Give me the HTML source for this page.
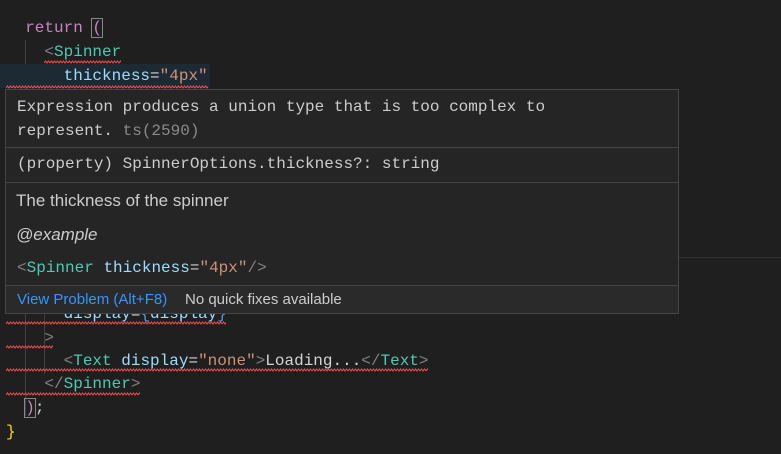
<!DOCTYPE html>
<html><head><style>
body{margin:0;width:781px;height:454px;background:#1f1f1f;overflow:hidden;position:relative;font-family:"Liberation Mono",monospace;font-size:16px;}
.l{position:absolute;left:6px;height:24px;line-height:24px;white-space:pre;color:#d4d4d4;}
.k{color:#c586c0}.t{color:#4ec9b0}.a{color:#9cdcfe}.s{color:#ce9178}.g{color:#808080}.b{color:#569cd6}.y{color:#ffd700}
.sq{position:absolute;height:4px;}
.guide{position:absolute;width:1px;background:#404040;}
#hov{position:absolute;left:5px;top:89px;width:672px;height:223px;background:#252526;border:1px solid #454545;color:#cccccc;}
.sep{position:absolute;left:0;right:0;height:1px;background:#454545;}
.sans{font-family:"Liberation Sans",sans-serif;}
</style></head><body>
<svg width="0" height="0" style="position:absolute"><defs><pattern id="w" width="6" height="4" patternUnits="userSpaceOnUse"><path d="M0 3 L1.5 1 L3 3 L4.5 1 L6 3" stroke="#f14c4c" stroke-width="1" fill="none"/></pattern></defs></svg>
<div class="guide" style="left:25px;top:40px;height:376px"></div>
<div class="guide" style="left:44px;top:64px;height:310px"></div>
<div style="position:absolute;left:0;top:64px;width:210px;height:24px;background:#1e2a33"></div>
<div class="l" style="top:16px">  <span class="k">return</span> <span class="k" style="outline:1px solid #888">(</span></div>
<div class="l" style="top:40px">    <span class="g">&lt;</span><span class="t">Spinner</span></div>
<svg class="sq" style="left:44px;top:60px;width:77px"><rect width="100%" height="4" fill="url(#w)"/></svg>
<div class="l" style="top:64px">      <span class="a">thickness</span>=<span class="s">"4px"</span></div>
<svg class="sq" style="left:6px;top:85px;width:202px"><rect width="100%" height="4" fill="url(#w)"/></svg>
<div class="l" style="top:302px">      <span class="a">display</span>=<span class="b">{</span><span class="a">display</span><span class="b">}</span></div>
<svg class="sq" style="left:6px;top:321px;width:220px"><rect width="100%" height="4" fill="url(#w)"/></svg>
<div class="l" style="top:326px">    <span class="g">&gt;</span></div>
<svg class="sq" style="left:6px;top:345px;width:47px"><rect width="100%" height="4" fill="url(#w)"/></svg>
<div class="l" style="top:349px">      <span class="g">&lt;</span><span class="t">Text</span> <span class="a">display</span>=<span class="s">"none"</span><span class="g">&gt;</span>Loading...<span class="g">&lt;/</span><span class="t">Text</span><span class="g">&gt;</span></div>
<svg class="sq" style="left:6px;top:368px;width:422px"><rect width="100%" height="4" fill="url(#w)"/></svg>
<div class="l" style="top:372px">    <span class="g">&lt;/</span><span class="t">Spinner</span><span class="g">&gt;</span></div>
<svg class="sq" style="left:6px;top:392px;width:134px"><rect width="100%" height="4" fill="url(#w)"/></svg>
<div class="l" style="top:396px">  <span class="k" style="outline:1px solid #888">)</span>;</div>
<div class="l" style="top:420px;left:6px"><span class="y">}</span></div>
<div style="position:absolute;left:679px;top:257px;width:102px;height:1px;background:#333"></div>
<div id="hov">
 <div style="position:absolute;left:11px;top:5px;line-height:24px;white-space:pre">Expression produces a union type that is too complex to
represent. <span style="color:#8a8a8a">ts(2590)</span></div>
 <div class="sep" style="top:57px"></div>
 <div style="position:absolute;left:11px;top:62px;line-height:24px;white-space:pre">(property) SpinnerOptions.thickness?: string</div>
 <div class="sep" style="top:92px"></div>
 <div class="sans" style="position:absolute;left:10px;top:100px;line-height:22px;font-size:17px">The thickness of the spinner</div>
 <div class="sans" style="position:absolute;left:10px;top:134px;line-height:22px;font-size:17px;font-style:italic">@example</div>
 <div style="position:absolute;left:11px;top:166px;line-height:24px;white-space:pre"><span class="g">&lt;</span><span class="t">Spinner</span> <span class="a">thickness</span>=<span class="s">"4px"</span><span class="g">/&gt;</span></div>
 <div class="sep" style="top:195px"></div>
 <div class="sans" style="position:absolute;left:0;right:0;top:196px;height:27px;background:#2a2a2b;font-size:15px;line-height:27px">
  <span style="position:absolute;left:11px;color:#3794ff">View Problem (Alt+F8)</span>
  <span style="position:absolute;left:179px;color:#cccccc">No quick fixes available</span>
 </div>
</div>
</body></html>
